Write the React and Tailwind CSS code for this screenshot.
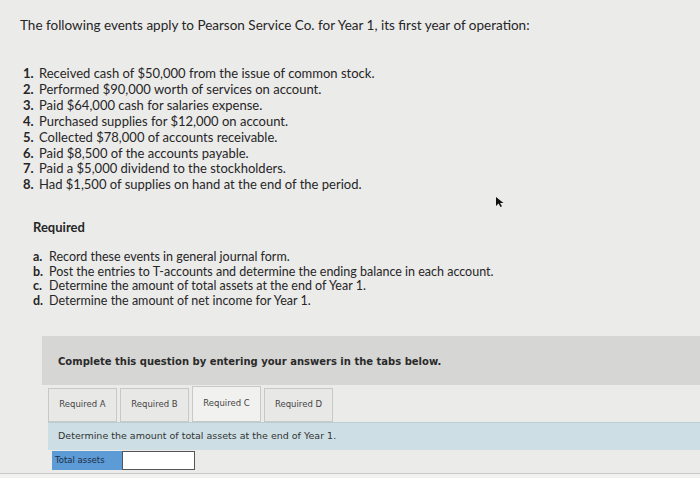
import React from 'react';

const events = [
  'Received cash of $50,000 from the issue of common stock.',
  'Performed $90,000 worth of services on account.',
  'Paid $64,000 cash for salaries expense.',
  'Purchased supplies for $12,000 on account.',
  'Collected $78,000 of accounts receivable.',
  'Paid $8,500 of the accounts payable.',
  'Paid a $5,000 dividend to the stockholders.',
  'Had $1,500 of supplies on hand at the end of the period.',
];

const required = [
  ['a.', 'Record these events in general journal form.'],
  ['b.', 'Post the entries to T-accounts and determine the ending balance in each account.'],
  ['c.', 'Determine the amount of total assets at the end of Year 1.'],
  ['d.', 'Determine the amount of net income for Year 1.'],
];

const tabs = ['Required A', 'Required B', 'Required C', 'Required D'];

export default function App() {
  return (
    <div className="relative w-[700px] h-[478px] overflow-hidden bg-[#ebebea] text-[#262626] font-['Lato','Liberation_Sans',sans-serif]">
      <p className="pl-[20px] pt-[16px] text-[13.5px] leading-[18px]">
        The following events apply to Pearson Service Co. for Year 1, its first year of operation:
      </p>

      <ol className="mt-[32px] pl-[23px] text-[13px] leading-[15.9px]">
        {events.map((e, i) => (
          <li key={i} className="flex gap-[6px]">
            <span className="font-bold w-[10px]">{i + 1}.</span>
            <span>{e}</span>
          </li>
        ))}
      </ol>

      <h3 className="mt-[26px] pl-[33px] text-[13px] font-bold leading-[16px]">Required</h3>

      <ul className="mt-[15px] pl-[33px] text-[12.5px] leading-[14.6px]">
        {required.map(([k, t]) => (
          <li key={k} className="flex gap-[6px]">
            <span className="font-bold w-[10px]">{k}</span>
            <span>{t}</span>
          </li>
        ))}
      </ul>

      <div className="mt-[27px] ml-[42px] h-[49px] bg-[#d6d6d4] flex items-center pl-[16px] pt-[2px]">
        <span className="font-['DejaVu_Sans',sans-serif] font-bold text-[10px] text-[#2a2a2a]">
          Complete this question by entering your answers in the tabs below.
        </span>
      </div>

      <div className="ml-[48px] mt-[1px] flex gap-[3px] h-[36px] items-end">
        {tabs.map((t, i) => (
          <div
            key={t}
            className={`w-[69px] border border-[#c8c8c6] flex items-center justify-center font-['DejaVu_Sans',sans-serif] text-[8.5px] text-[#444] ${
              i === 2 ? 'h-[36px] bg-[#f1f1ef]' : 'h-[34px] bg-[#e8e8e6]'
            }`}
          >
            {t}
          </div>
        ))}
      </div>

      <div className="ml-[48px] h-[28px] bg-[#cddfe5] border-t border-[#b9cdd4] flex items-center pl-[10px]">
        <span className="font-['DejaVu_Sans',sans-serif] text-[9.5px] text-[#333]">
          Determine the amount of total assets at the end of Year 1.
        </span>
      </div>

      <div className="ml-[52px] mt-[1px] flex h-[19px]">
        <div className="w-[70px] bg-[#5d9bd6] flex items-center pl-[3px] font-['DejaVu_Sans',sans-serif] text-[8.5px] text-[#1d2f45]">
          Total assets
        </div>
        <div className="w-[73px] bg-white border border-[#555]" />
      </div>

      <div className="mt-[3px] border-t border-[#c9c9c7] h-[10px] bg-[#f2f2f0]" />

      <svg className="absolute left-[495px] top-[196px]" width="10" height="12" viewBox="0 0 10 12">
        <path d="M1 1 L1 10 L3.5 7.5 L5.5 11 L7 10.2 L5 7 L8.5 7 Z" fill="#111" />
      </svg>
    </div>
  );
}
